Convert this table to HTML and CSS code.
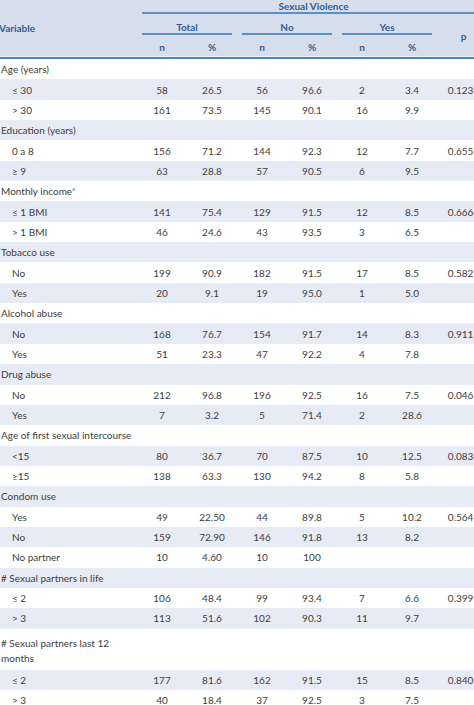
FILE: index.html
```html
<!DOCTYPE html>
<html>
<head>
<meta charset="utf-8">
<link rel="stylesheet" href="styles.css">
</head>
<body>
<table class="tbl">
  <colgroup>
    <col class="c-var"><col class="c-num"><col class="c-num"><col class="c-num"><col class="c-num"><col class="c-num"><col class="c-num"><col class="c-p">
  </colgroup>
  <thead>
    <tr class="h1">
      <th class="var" rowspan="3">Variable</th>
      <th colspan="7"><div class="hl">Sexual Violence</div></th>
    </tr>
    <tr class="h2">
      <th colspan="2"><div class="hl">Total</div></th>
      <th colspan="2"><div class="hl">No</div></th>
      <th colspan="2"><div class="hl">Yes</div></th>
      <th class="p" rowspan="2">p</th>
    </tr>
    <tr class="h3">
      <th>n</th><th>%</th><th>n</th><th>%</th><th>n</th><th>%</th>
    </tr>
  </thead>
  <tbody>
    <tr class="cat"><td colspan="8">Age (years)</td></tr>
    <tr><td class="sub">≤ 30</td><td>58</td><td>26.5</td><td>56</td><td>96.6</td><td>2</td><td>3.4</td><td>0.1234</td></tr>
    <tr><td class="sub">&gt; 30</td><td>161</td><td>73.5</td><td>145</td><td>90.1</td><td>16</td><td>9.9</td><td></td></tr>

    <tr class="cat"><td colspan="8">Education (years)</td></tr>
    <tr><td class="sub">0 a 8</td><td>156</td><td>71.2</td><td>144</td><td>92.3</td><td>12</td><td>7.7</td><td>0.6555</td></tr>
    <tr><td class="sub">≥ 9</td><td>63</td><td>28.8</td><td>57</td><td>90.5</td><td>6</td><td>9.5</td><td></td></tr>

    <tr class="cat"><td colspan="8">Monthly income<sup>a</sup></td></tr>
    <tr><td class="sub">≤ 1 BMI</td><td>141</td><td>75.4</td><td>129</td><td>91.5</td><td>12</td><td>8.5</td><td>0.6666</td></tr>
    <tr><td class="sub">&gt; 1 BMI</td><td>46</td><td>24.6</td><td>43</td><td>93.5</td><td>3</td><td>6.5</td><td></td></tr>

    <tr class="cat"><td colspan="8">Tobacco use</td></tr>
    <tr><td class="sub">No</td><td>199</td><td>90.9</td><td>182</td><td>91.5</td><td>17</td><td>8.5</td><td>0.5825</td></tr>
    <tr><td class="sub">Yes</td><td>20</td><td>9.1</td><td>19</td><td>95.0</td><td>1</td><td>5.0</td><td></td></tr>

    <tr class="cat"><td colspan="8">Alcohol abuse</td></tr>
    <tr><td class="sub">No</td><td>168</td><td>76.7</td><td>154</td><td>91.7</td><td>14</td><td>8.3</td><td>0.9115</td></tr>
    <tr><td class="sub">Yes</td><td>51</td><td>23.3</td><td>47</td><td>92.2</td><td>4</td><td>7.8</td><td></td></tr>

    <tr class="cat"><td colspan="8">Drug abuse</td></tr>
    <tr><td class="sub">No</td><td>212</td><td>96.8</td><td>196</td><td>92.5</td><td>16</td><td>7.5</td><td>0.0469</td></tr>
    <tr><td class="sub">Yes</td><td>7</td><td>3.2</td><td>5</td><td>71.4</td><td>2</td><td>28.6</td><td></td></tr>

    <tr class="cat"><td colspan="8">Age of first sexual intercourse</td></tr>
    <tr><td class="sub">&lt;15</td><td>80</td><td>36.7</td><td>70</td><td>87.5</td><td>10</td><td>12.5</td><td>0.0834</td></tr>
    <tr><td class="sub">≥15</td><td>138</td><td>63.3</td><td>130</td><td>94.2</td><td>8</td><td>5.8</td><td></td></tr>

    <tr class="cat"><td colspan="8">Condom use</td></tr>
    <tr><td class="sub">Yes</td><td>49</td><td>22.50</td><td>44</td><td>89.8</td><td>5</td><td>10.2</td><td>0.5643</td></tr>
    <tr><td class="sub">No</td><td>159</td><td>72.90</td><td>146</td><td>91.8</td><td>13</td><td>8.2</td><td></td></tr>
    <tr><td class="sub">No partner</td><td>10</td><td>4.60</td><td>10</td><td>100</td><td></td><td></td><td></td></tr>

    <tr class="cat"><td colspan="8"># Sexual partners in life</td></tr>
    <tr><td class="sub">≤ 2</td><td>106</td><td>48.4</td><td>99</td><td>93.4</td><td>7</td><td>6.6</td><td>0.3995</td></tr>
    <tr><td class="sub">&gt; 3</td><td>113</td><td>51.6</td><td>102</td><td>90.3</td><td>11</td><td>9.7</td><td></td></tr>

    <tr class="cat two"><td class="wrap"># Sexual partners last 12 months</td><td colspan="7"></td></tr>
    <tr><td class="sub">≤ 2</td><td>177</td><td>81.6</td><td>162</td><td>91.5</td><td>15</td><td>8.5</td><td>0.8402</td></tr>
    <tr><td class="sub">&gt; 3</td><td>40</td><td>18.4</td><td>37</td><td>92.5</td><td>3</td><td>7.5</td><td></td></tr>
  </tbody>
</table>
</body>
</html>
```

FILE: styles.css
```css
html, body {
  margin: 0;
  padding: 0;
  background: #ffffff;
  overflow: hidden;
}

.tbl {
  font-family: Lato, "Open Sans", sans-serif;
  font-size: 10px;
  line-height: 12px;
  color: #404040;
  border-collapse: separate;
  border-spacing: 0;
  table-layout: fixed;
  width: 492px;
  margin-left: -2px;
}

.c-var { width: 139px; }
.c-num { width: 50px; }
.c-p { width: 53px; }

.tbl th, .tbl td {
  padding: 0;
}

/* header */
.tbl thead th {
  background: #d6ddec;
  color: #2f5f99;
  font-weight: 700;
  text-align: center;
  vertical-align: bottom;
}

.tbl thead th.var {
  text-align: left;
  vertical-align: middle;
  padding-left: 1px;
  padding-bottom: 2px;
  border-bottom: 2px solid #4f87bd;
  box-shadow: inset 0 -1px 0 #eef1f8;
}

.tbl thead th.p {
  vertical-align: middle;
  border-bottom: 2px solid #4f87bd;
  box-shadow: inset 0 -1px 0 #eef1f8;
}

.hl {
  margin: 0 5px;
  border-bottom: 2px solid #5a8fc2;
}

.h1 { height: 14px; }
.h2 { height: 21px; }
.h3 { height: 24px; }

.h3 th {
  padding-bottom: 4px;
  border-bottom: 2px solid #4f87bd;
  box-shadow: inset 0 -1px 0 #eef1f8;
}

/* body */
.tbl tbody tr { height: 20.35px; }
.tbl tbody tr:nth-child(even) { background: #e7ebf5; }

.tbl tbody td {
  text-align: center;
  vertical-align: middle;
  white-space: nowrap;
}

.tbl tbody tr.cat td {
  text-align: left;
  padding-left: 3px;
}

.tbl tbody td.sub {
  text-align: left;
  padding-left: 14px;
}

.tbl tbody tr.two { height: 41px; }
.tbl tbody td.wrap {
  white-space: normal;
  line-height: 15px;
  padding-top: 4px;
  padding-right: 2px;
}

sup {
  font-size: 5px;
  line-height: 0;
  vertical-align: 4px;
}
```
